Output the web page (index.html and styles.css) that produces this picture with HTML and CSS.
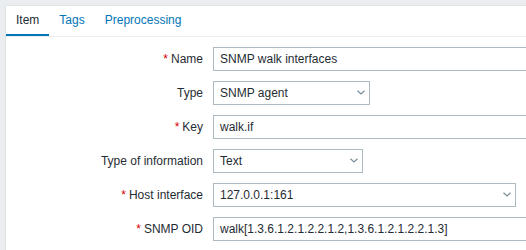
FILE: index.html
```html
<!DOCTYPE html>
<html>
<head>
<meta charset="utf-8">
<link rel="stylesheet" href="styles.css">
</head>
<body>
<div class="panel">
  <ul class="tabs">
    <li class="tab active">Item</li>
    <li class="tab">Tags</li>
    <li class="tab">Preprocessing</li>
  </ul>
  <div class="form">
    <label class="lbl"><span class="req">*</span>Name</label>
    <div class="field"><div class="input w-wide">SNMP walk interfaces</div></div>

    <label class="lbl">Type</label>
    <div class="field"><div class="input select w-type">SNMP agent<svg class="chev" width="8" height="5" viewBox="0 0 8 5"><path d="M0.5 0.8 L4 4 L7.5 0.8" fill="none" stroke="#768d99" stroke-width="1.2"/></svg></div></div>

    <label class="lbl"><span class="req">*</span>Key</label>
    <div class="field"><div class="input w-wide">walk.if</div></div>

    <label class="lbl">Type of information</label>
    <div class="field"><div class="input select w-info">Text<svg class="chev" width="8" height="5" viewBox="0 0 8 5"><path d="M0.5 0.8 L4 4 L7.5 0.8" fill="none" stroke="#768d99" stroke-width="1.2"/></svg></div></div>

    <label class="lbl"><span class="req">*</span>Host interface</label>
    <div class="field"><div class="input select w-host">127.0.0.1:161<svg class="chev" width="8" height="5" viewBox="0 0 8 5"><path d="M0.5 0.8 L4 4 L7.5 0.8" fill="none" stroke="#768d99" stroke-width="1.2"/></svg></div></div>

    <label class="lbl"><span class="req">*</span>SNMP OID</label>
    <div class="field"><div class="input w-wide">walk[1.3.6.1.2.1.2.2.1.2,1.3.6.1.2.1.2.2.1.3]</div></div>
  </div>
</div>
</body>
</html>
```
FILE: styles.css
```css
html, body {
  margin: 0;
  padding: 0;
  overflow: hidden;
}
body {
  background: #ebeef0;
  font-family: "Liberation Sans", Arial, sans-serif;
  font-size: 12px;
  color: #1f2c33;
  padding: 5px 0 0 5px;
  width: 526px;
  height: 250px;
  box-sizing: border-box;
}
.panel {
  background: #fff;
  border: 1px solid #dfe4e7;
  border-right: none;
  border-bottom: none;
  height: 245px;
  box-sizing: border-box;
  overflow: hidden;
}
.tabs {
  list-style: none;
  margin: 0;
  padding: 0;
  display: flex;
  height: 30px;
  border-bottom: 1px solid #ebeef0;
}
.tab {
  padding: 0 10px;
  line-height: 28px;
  color: #0275b8;
  border-bottom: 2px solid transparent;
}
.tab.active {
  color: #1f2c33;
  border-bottom-color: #0275b8;
}
.form {
  display: grid;
  grid-template-columns: 197px 1fr;
  column-gap: 10px;
  row-gap: 10px;
  padding-top: 10px;
  align-items: center;
}
.lbl {
  text-align: right;
  white-space: nowrap;
}
.field {
  min-width: 0;
}
.req {
  color: #d40000;
  margin-right: 3px;
}
.input {
  box-sizing: border-box;
  height: 24px;
  line-height: 22px;
  border: 1px solid #acbbc2;
  padding: 0 6px;
  white-space: nowrap;
  background: #fff;
  position: relative;
}
.select {
  padding-right: 20px;
}
.chev {
  position: absolute;
  right: 4px;
  top: 8px;
}
.w-wide { width: 453px; }
.w-type { width: 157px; }
.w-info { width: 150px; }
.w-host { width: 303px; }
```
